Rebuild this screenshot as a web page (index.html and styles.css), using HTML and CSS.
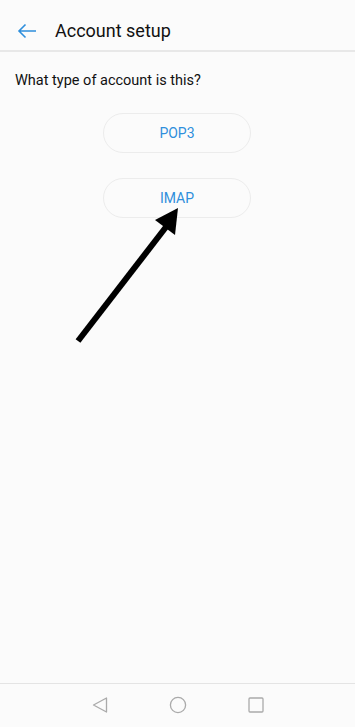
FILE: index.html
```html
<!DOCTYPE html>
<html lang="en">
<head>
  <meta charset="UTF-8">
  <title>Account setup</title>
  <link rel="stylesheet" href="styles.css">
</head>
<body>
  <div class="screen">
    <header class="toolbar">
      <svg class="back" width="20" height="16" viewBox="0 0 20 16">
        <path d="M19 8H2M8.5 1.5L2 8l6.5 6.5" fill="none" stroke="#2f8fdc" stroke-width="1.6"/>
      </svg>
      <h1>Account setup</h1>
    </header>

    <main class="content">
      <p class="question">What type of account is this?</p>
      <div class="choices">
        <button class="choice">POP3</button>
        <button class="choice">IMAP</button>
      </div>

      <!-- annotation arrow -->
      <svg class="pointer" width="355" height="400" viewBox="0 0 355 400">
        <line x1="78" y1="289" x2="166" y2="175" stroke="#000" stroke-width="6"/>
        <polygon points="178,156 175,183 155,168" fill="#000"/>
      </svg>
    </main>

    <nav class="navbar">
      <svg width="16" height="16" viewBox="0 0 16 16">
        <path d="M14.5 1v14L1.5 8z" fill="none" stroke="#aaa" stroke-width="1.3" stroke-linejoin="round"/>
      </svg>
      <svg width="18" height="18" viewBox="0 0 18 18">
        <circle cx="9" cy="9" r="7.6" fill="none" stroke="#aaa" stroke-width="1.3"/>
      </svg>
      <svg width="16" height="16" viewBox="0 0 16 16">
        <rect x="1" y="1" width="14" height="14" rx="1" fill="none" stroke="#aaa" stroke-width="1.3"/>
      </svg>
    </nav>
  </div>
</body>
</html>
```

FILE: styles.css
```css
html, body {
  margin: 0;
  padding: 0;
}

body {
  font-family: Roboto, "Liberation Sans", sans-serif;
  background-color: #fbfbfb;
  color: #111;
}

.screen {
  width: 355px;
  height: 727px;
  display: flex;
  flex-direction: column;
}

.toolbar {
  height: 40px;
  padding-top: 10px;
  display: flex;
  align-items: center;
  padding-left: 17px;
  background-color: #fbfbfb;
  border-bottom: 2px solid #e8e8e8;
  flex-shrink: 0;
}

.toolbar .back {
  margin-top: 1px;
}

.toolbar h1 {
  margin: 0 0 0 18px;
  font-size: 18px;
  font-weight: 400;
}

.content {
  flex: 1;
  position: relative;
}

.question {
  margin: 20px 0 0 15px;
  font-size: 14.5px;
}

.choices {
  display: flex;
  flex-direction: column;
  align-items: center;
  gap: 25px;
  margin-top: 24px;
}

.choice {
  width: 148px;
  height: 40px;
  margin-right: 1px;
  border: 1px solid #ececec;
  border-radius: 20px;
  background: #fbfbfb;
  color: #2f8fdc;
  font-family: Roboto, "Liberation Sans", sans-serif;
  font-size: 14px;
}

.pointer {
  position: absolute;
  left: 0;
  top: 0;
}

.navbar {
  height: 42px;
  border-top: 1px solid #e4e4e4;
  display: flex;
  align-items: center;
  justify-content: center;
  gap: 61px;
  padding-bottom: 1px;
}
```
